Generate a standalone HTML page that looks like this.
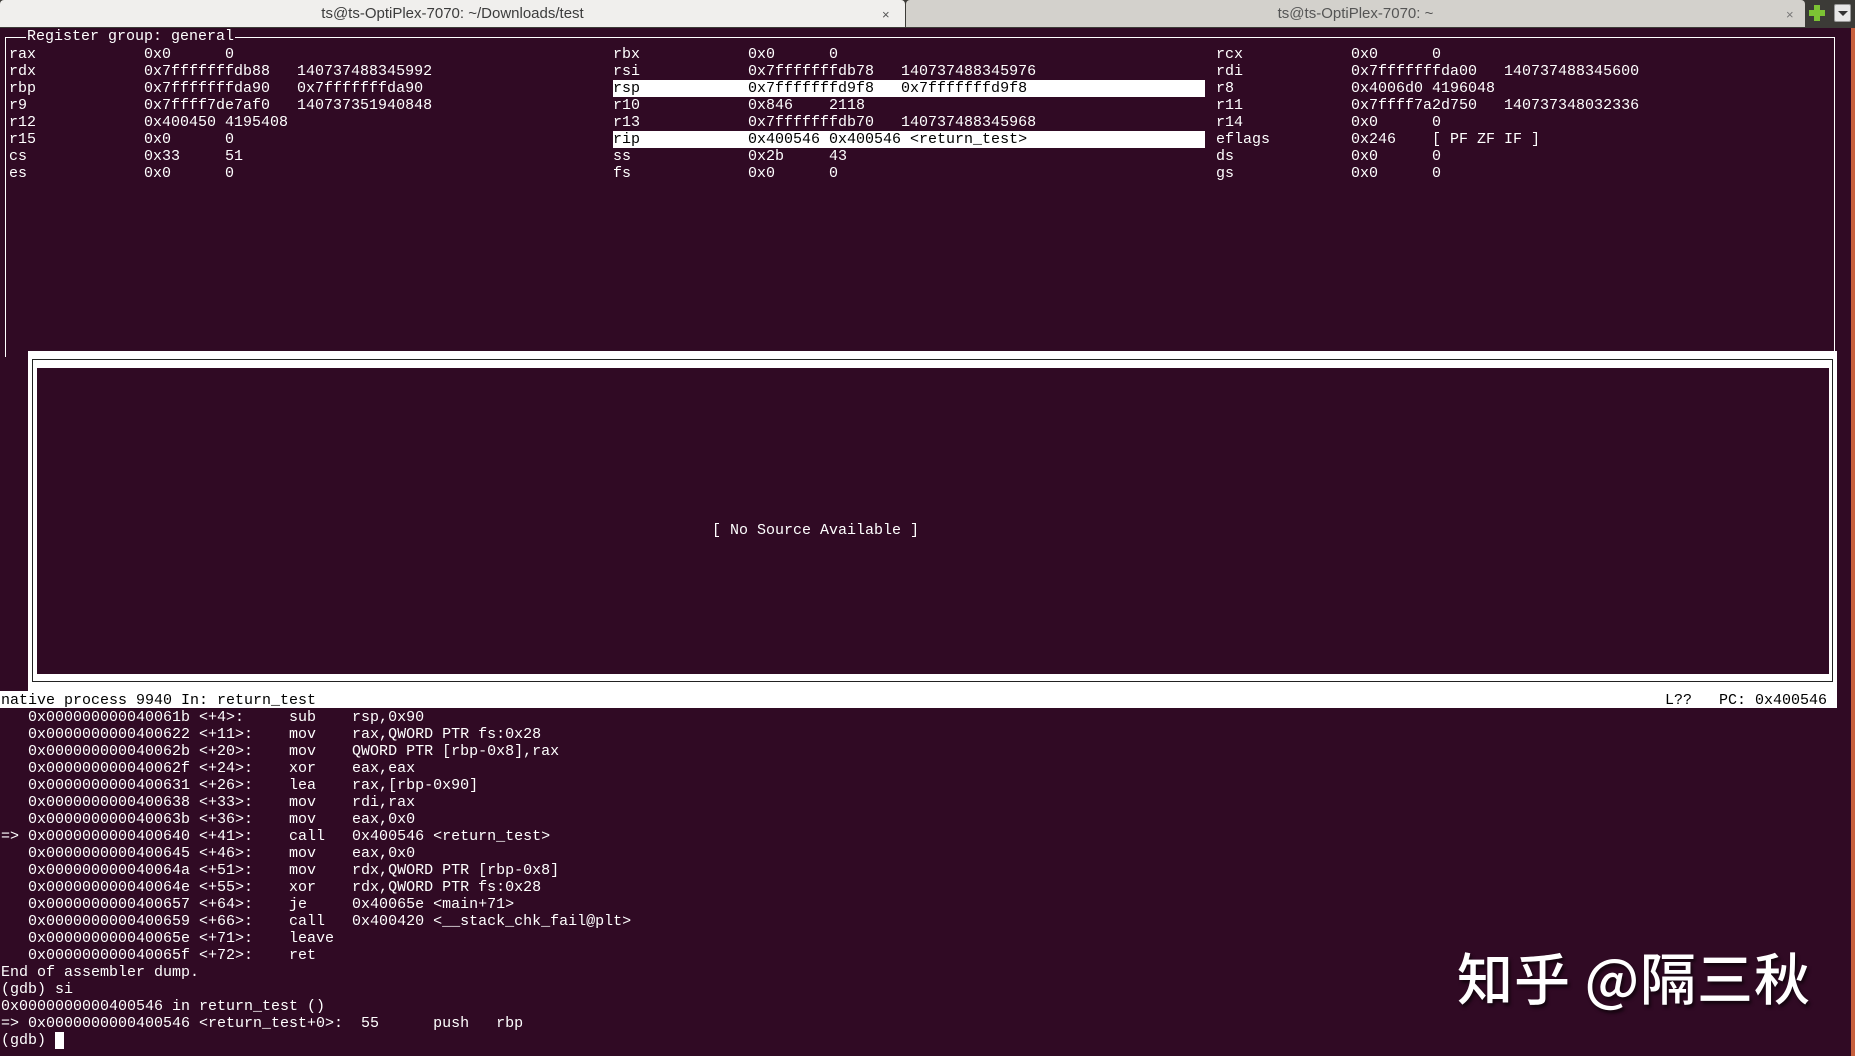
<!DOCTYPE html>
<html><head><meta charset="utf-8"><style>
*{margin:0;padding:0;box-sizing:border-box}
body{width:1855px;height:1056px;background:#300a24;position:relative;overflow:hidden;font-family:"Liberation Mono",monospace;font-size:15px;color:#fff}
.a{position:absolute}
pre{font-family:"Liberation Mono",monospace;font-size:15px;line-height:17px;margin:0;white-space:pre}
.tab{position:absolute;top:0;height:27px;font-family:"Liberation Sans",sans-serif;font-size:15px;color:#3c3c3c;text-align:center;line-height:28px}
</style></head><body>
<div class="a" style="left:0;top:0;width:1855px;height:28px;background:#3c3b37"></div>
<div class="tab" style="left:0;width:905px;background:#f0efed;border-radius:4px 4px 0 0">ts@ts-OptiPlex-7070: ~/Downloads/test</div>
<div class="a" style="left:882px;top:7px;color:#555;font-family:'Liberation Sans',sans-serif;font-size:13px">×</div>
<div class="tab" style="left:906px;width:899px;background:#d3d1cc;color:#555;border-radius:4px 4px 0 0">ts@ts-OptiPlex-7070: ~</div>
<div class="a" style="left:1786px;top:7px;color:#777;font-family:'Liberation Sans',sans-serif;font-size:13px">×</div>
<div class="a" style="left:1809px;top:5px;width:16px;height:16px"><div class="a" style="left:5px;top:0;width:6px;height:16px;background:#7cc334"></div><div class="a" style="left:0;top:5px;width:16px;height:6px;background:#7cc334"></div></div>
<div class="a" style="left:1834px;top:4px;width:17px;height:18px;background:#e8e8e8;border:1px solid #999;border-radius:2px"><div class="a" style="left:3px;top:6px;border-left:5px solid transparent;border-right:5px solid transparent;border-top:5px solid #333"></div></div>
<div class="a" style="left:1851px;top:28px;width:4px;height:1028px;background:#c8603d"></div>

<div class="a" style="left:5px;top:37px;width:1830px;height:320px;border:1px solid #fff;border-bottom:none"></div>
<pre class="a" style="left:26px;top:28px;background:#300a24;padding:0 1px">Register group: general</pre>
<div class="a" style="left:613px;top:80px;width:592px;height:17px;background:#fff"></div>
<div class="a" style="left:613px;top:131px;width:592px;height:17px;background:#fff"></div>
<pre class="a" style="left:9px;top:46px">rax            0x0      0
rdx            0x7fffffffdb88   140737488345992
rbp            0x7fffffffda90   0x7fffffffda90
r9             0x7ffff7de7af0   140737351940848
r12            0x400450 4195408
r15            0x0      0
cs             0x33     51
es             0x0      0</pre>
<pre class="a" style="left:613px;top:46px">rbx            0x0      0
rsi            0x7fffffffdb78   140737488345976
<span style="color:#000">rsp            0x7fffffffd9f8   0x7fffffffd9f8</span>
r10            0x846    2118
r13            0x7fffffffdb70   140737488345968
<span style="color:#000">rip            0x400546 0x400546 &lt;return_test&gt;</span>
ss             0x2b     43
fs             0x0      0</pre>
<pre class="a" style="left:1216px;top:46px">rcx            0x0      0
rdi            0x7fffffffda00   140737488345600
r8             0x4006d0 4196048
r11            0x7ffff7a2d750   140737348032336
r14            0x0      0
eflags         0x246    [ PF ZF IF ]
ds             0x0      0
gs             0x0      0</pre>

<div class="a" style="left:28px;top:351px;width:1809px;height:340px;background:#fff"></div>
<div class="a" style="left:32px;top:359px;width:1801px;height:323px;border:1px solid #222"></div>
<div class="a" style="left:37px;top:368px;width:1792px;height:306px;background:#300a24"></div>
<pre class="a" style="left:712px;top:522px">[ No Source Available ]</pre>

<div class="a" style="left:0;top:691px;width:1837px;height:17px;background:#fff"></div>
<pre class="a" style="left:1px;top:692px;color:#000">native process 9940 In: return_test</pre>
<pre class="a" style="left:1665px;top:692px;color:#000">L??   PC: 0x400546</pre>

<pre class="a" style="left:1px;top:709px">   0x000000000040061b &lt;+4&gt;:     sub    rsp,0x90
   0x0000000000400622 &lt;+11&gt;:    mov    rax,QWORD PTR fs:0x28
   0x000000000040062b &lt;+20&gt;:    mov    QWORD PTR [rbp-0x8],rax
   0x000000000040062f &lt;+24&gt;:    xor    eax,eax
   0x0000000000400631 &lt;+26&gt;:    lea    rax,[rbp-0x90]
   0x0000000000400638 &lt;+33&gt;:    mov    rdi,rax
   0x000000000040063b &lt;+36&gt;:    mov    eax,0x0
=&gt; 0x0000000000400640 &lt;+41&gt;:    call   0x400546 &lt;return_test&gt;
   0x0000000000400645 &lt;+46&gt;:    mov    eax,0x0
   0x000000000040064a &lt;+51&gt;:    mov    rdx,QWORD PTR [rbp-0x8]
   0x000000000040064e &lt;+55&gt;:    xor    rdx,QWORD PTR fs:0x28
   0x0000000000400657 &lt;+64&gt;:    je     0x40065e &lt;main+71&gt;
   0x0000000000400659 &lt;+66&gt;:    call   0x400420 &lt;__stack_chk_fail@plt&gt;
   0x000000000040065e &lt;+71&gt;:    leave
   0x000000000040065f &lt;+72&gt;:    ret
End of assembler dump.
(gdb) si
0x0000000000400546 in return_test ()
=&gt; 0x0000000000400546 &lt;return_test+0&gt;:  55      push   rbp
(gdb) <span style="background:#fff">&nbsp;</span></pre>

<div class="a" style="left:1457px;top:942px;font-family:'Noto Sans CJK SC',sans-serif;font-size:56px;letter-spacing:1px;line-height:70px;color:#fff;font-weight:500;text-shadow:2px 3px 3px rgba(0,0,0,.6);white-space:nowrap">知乎 @隔三秋</div>
</body></html>
